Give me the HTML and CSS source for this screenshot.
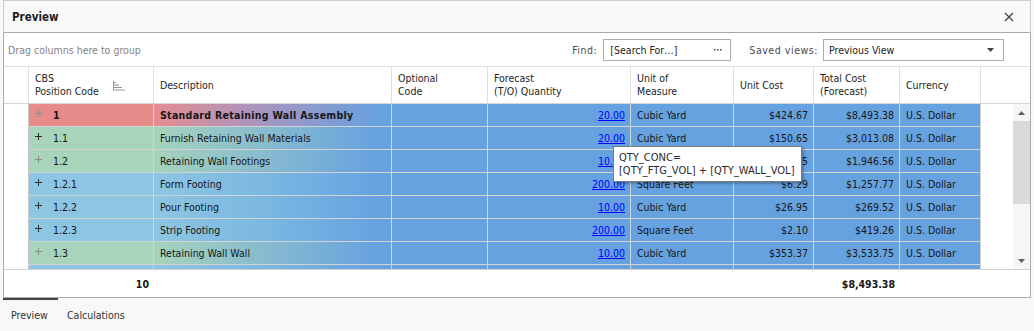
FILE: index.html
```html
<!DOCTYPE html>
<html>
<head>
<meta charset="utf-8">
<title>Preview</title>
<link rel="stylesheet" href="styles.css">
</head>
<body>
<div class="window">
  <div class="titlebar">
    <span class="title">Preview</span>
    <svg class="close" width="10" height="10" viewBox="0 0 10 10"><path d="M1 1L9 9M9 1L1 9" stroke="#444" stroke-width="1.2" fill="none"/></svg>
  </div>
  <div class="panel">
    <div class="toolbar">
      <span class="group-hint">Drag columns here to group</span>
      <span class="lbl find-lbl">Find:</span>
      <div class="find-box"><span>[Search For…]</span><svg class="dots" width="8" height="3" viewBox="0 0 8 3"><rect x="0" y="1" width="1.6" height="1.6" fill="#555"/><rect x="3" y="1" width="1.6" height="1.6" fill="#555"/><rect x="6" y="1" width="1.6" height="1.6" fill="#555"/></svg></div>
      <span class="lbl saved-lbl">Saved views:</span>
      <div class="select"><span>Previous View</span><svg class="caret" width="7" height="4" viewBox="0 0 7 4"><path d="M0 0H7L3.5 4Z" fill="#444"/></svg></div>
    </div>

    <div class="cols head">
      <div class="hc ind"></div>
      <div class="hc cbs-h"><span>CBS<br>Position Code</span><svg class="sort" width="12" height="10" viewBox="0 0 12 10"><path d="M0.5 0V9.5" stroke="#9a9a9a" stroke-width="1"/><path d="M1 1.5H3M1 4H6M1 6.5H9M1 9H12" stroke="#9a9a9a" stroke-width="1"/></svg></div>
      <div class="hc">Description</div>
      <div class="hc">Optional<br>Code</div>
      <div class="hc">Forecast<br>(T/O) Quantity</div>
      <div class="hc">Unit of<br>Measure</div>
      <div class="hc">Unit Cost</div>
      <div class="hc">Total Cost<br>(Forecast)</div>
      <div class="hc">Currency</div>
      <div class="hc rest"></div>
    </div>

    <div class="body-wrap">
      <div class="rows">
        <div class="cols row pink bold">
          <div class="c ind"></div>
          <div class="c cbs"><span class="plus light"></span>1</div>
          <div class="c desc">Standard Retaining Wall Assembly</div>
          <div class="c"></div>
          <div class="c num"><a>20.00</a></div>
          <div class="c">Cubic Yard</div>
          <div class="c num">$424.67</div>
          <div class="c num">$8,493.38</div>
          <div class="c">U.S. Dollar</div>
          <div class="c rest"></div>
        </div>
        <div class="cols row green">
          <div class="c ind"></div>
          <div class="c cbs"><span class="plus"></span>1.1</div>
          <div class="c desc">Furnish Retaining Wall Materials</div>
          <div class="c"></div>
          <div class="c num"><a>20.00</a></div>
          <div class="c">Cubic Yard</div>
          <div class="c num">$150.65</div>
          <div class="c num">$3,013.08</div>
          <div class="c">U.S. Dollar</div>
          <div class="c rest"></div>
        </div>
        <div class="cols row green">
          <div class="c ind"></div>
          <div class="c cbs"><span class="plus light"></span>1.2</div>
          <div class="c desc">Retaining Wall Footings</div>
          <div class="c"></div>
          <div class="c num"><a>10.00</a></div>
          <div class="c">Cubic Yard</div>
          <div class="c num">$194.65</div>
          <div class="c num">$1,946.56</div>
          <div class="c">U.S. Dollar</div>
          <div class="c rest"></div>
        </div>
        <div class="cols row lblue">
          <div class="c ind"></div>
          <div class="c cbs"><span class="plus"></span>1.2.1</div>
          <div class="c desc">Form Footing</div>
          <div class="c"></div>
          <div class="c num"><a>200.00</a></div>
          <div class="c">Square Feet</div>
          <div class="c num">$6.29</div>
          <div class="c num">$1,257.77</div>
          <div class="c">U.S. Dollar</div>
          <div class="c rest"></div>
        </div>
        <div class="cols row lblue">
          <div class="c ind"></div>
          <div class="c cbs"><span class="plus"></span>1.2.2</div>
          <div class="c desc">Pour Footing</div>
          <div class="c"></div>
          <div class="c num"><a>10.00</a></div>
          <div class="c">Cubic Yard</div>
          <div class="c num">$26.95</div>
          <div class="c num">$269.52</div>
          <div class="c">U.S. Dollar</div>
          <div class="c rest"></div>
        </div>
        <div class="cols row lblue">
          <div class="c ind"></div>
          <div class="c cbs"><span class="plus"></span>1.2.3</div>
          <div class="c desc">Strip Footing</div>
          <div class="c"></div>
          <div class="c num"><a>200.00</a></div>
          <div class="c">Square Feet</div>
          <div class="c num">$2.10</div>
          <div class="c num">$419.26</div>
          <div class="c">U.S. Dollar</div>
          <div class="c rest"></div>
        </div>
        <div class="cols row green">
          <div class="c ind"></div>
          <div class="c cbs"><span class="plus light"></span>1.3</div>
          <div class="c desc">Retaining Wall Wall</div>
          <div class="c"></div>
          <div class="c num"><a>10.00</a></div>
          <div class="c">Cubic Yard</div>
          <div class="c num">$353.37</div>
          <div class="c num">$3,533.75</div>
          <div class="c">U.S. Dollar</div>
          <div class="c rest"></div>
        </div>
        <div class="cols row lblue">
          <div class="c ind"></div>
          <div class="c cbs"><span class="plus"></span>1.3.1</div>
          <div class="c desc">Wall Forms</div>
          <div class="c"></div>
          <div class="c num"><a>400.00</a></div>
          <div class="c">Square Feet</div>
          <div class="c num">$6.29</div>
          <div class="c num">$2,515.54</div>
          <div class="c">U.S. Dollar</div>
          <div class="c rest"></div>
        </div>
      </div>
      <div class="scrollbar">
        <div class="sb-btn"><svg width="7" height="4" viewBox="0 0 7 4"><path d="M0 4H7L3.5 0Z" fill="#606060"/></svg></div>
        <div class="sb-track"><div class="sb-thumb"></div></div>
        <div class="sb-btn"><svg width="7" height="4" viewBox="0 0 7 4"><path d="M0 0H7L3.5 4Z" fill="#606060"/></svg></div>
      </div>
      <div class="tooltip">QTY_CONC=<br>[QTY_FTG_VOL] + [QTY_WALL_VOL]</div>
    </div>

    <div class="cols footer">
      <div class="f"></div>
      <div class="f num">10</div>
      <div class="f"></div>
      <div class="f"></div>
      <div class="f"></div>
      <div class="f"></div>
      <div class="f"></div>
      <div class="f num">$8,493.38</div>
      <div class="f"></div>
      <div class="f"></div>
    </div>
  </div>
  <div class="tabs">
    <div class="tab active">Preview</div>
    <div class="tab">Calculations</div>
  </div>
</div>
</body>
</html>
```

FILE: styles.css
```css
* { box-sizing: border-box; margin: 0; padding: 0; }
html, body { width: 1034px; height: 331px; overflow: hidden; }
body {
  background: #f8f8f8;
  font-family: "DejaVu Sans Condensed", "Liberation Sans", sans-serif;
  font-size: 10.5px;
  color: #161616;
}
.window {
  margin-left: 3px;
  width: 1028px;
  height: 331px;
  display: flex;
  flex-direction: column;
}
.titlebar {
  height: 33px;
  flex: none;
  border: 1px solid #cdcdcd;
  border-bottom-color: #a8a8a8;
  background: #f9f9f9;
  display: flex;
  align-items: center;
  padding-left: 8px;
}
.title { font-weight: bold; font-size: 11.5px; color: #1e1e1e; }
.close { margin-left: auto; margin-right: 16px; }

.panel {
  height: 265px;
  flex: none;
  background: #fff;
  border: 1px solid #adadad;
  border-top: 0;
  display: flex;
  flex-direction: column;
}
.toolbar {
  height: 33px;
  flex: none;
  display: flex;
  align-items: center;
  padding: 0 26px 0 4px;
}
.group-hint { color: #848484; }
.lbl { color: #4a4a4a; letter-spacing: 0.55px; }
.find-lbl { margin-left: auto; margin-right: 6px; }
.find-box {
  width: 128px;
  height: 22px;
  border: 1px solid #acacac;
  display: flex;
  align-items: center;
  justify-content: space-between;
  padding: 0 8px 0 6px;
  color: #222;
}
.saved-lbl { margin-left: 18px; margin-right: 5px; }
.select {
  width: 181px;
  height: 22px;
  border: 1px solid #acacac;
  display: flex;
  align-items: center;
  justify-content: space-between;
  padding: 0 9px 0 5px;
  color: #222;
}

.cols {
  display: grid;
  grid-template-columns: 25px 125px 238px 96px 143px 103px 80px 86px 81px 1fr;
}
.head {
  height: 38px;
  flex: none;
  border-top: 1px solid #dedede;
  border-bottom: 1px solid #d6d6d6;
}
.hc {
  border-right: 1px solid #dedede;
  display: flex;
  align-items: center;
  padding-left: 6px;
  line-height: 13px;
  color: #1e1e1e;
}
.hc.rest { border-right: 0; }
.cbs-h { justify-content: space-between; padding-right: 28px; }
.sort { margin-top: 2px; }

.body-wrap {
  height: 165px;
  flex: none;
  display: flex;
  position: relative;
  overflow: hidden;
}
.rows { flex: 1; overflow: hidden; }
.row { height: 23px; }
.c {
  border-right: 1px solid #d3d3d3;
  border-bottom: 1px solid #d3d3d3;
  background: #66a2e0;
  display: flex;
  align-items: center;
  padding: 0 5px 0 6px;
  white-space: nowrap;
  overflow: hidden;
}
.c.ind { background: #fff; border-bottom: 0; border-right-color: #c8c8c8; }
.c.rest { background: #fff; border: 0; }
.c.num { justify-content: flex-end; }
.c a { color: #0000ff; text-decoration: underline; }
.bold .cbs, .bold .desc { font-weight: bold; letter-spacing: 0.3px; }

.pink .cbs { background: #e88b8b; }
.pink .desc { background: linear-gradient(90deg, #e58c91 0%, #a895c0 45%, #66a2e0 95%); }
.green .cbs { background: #a7d4bb; }
.green .desc { background: linear-gradient(90deg, #a6d3bc 0%, #85b9d0 50%, #66a2e0 95%); }
.lblue .cbs { background: #8dc6e2; }
.lblue .desc { background: linear-gradient(90deg, #8dc6e2 0%, #7ab6e1 50%, #66a2e0 95%); }

.plus {
  position: relative;
  width: 7px;
  height: 7px;
  margin-right: 11px;
  margin-bottom: 4px;
  flex: none;
}
.plus::before, .plus::after {
  content: "";
  position: absolute;
  background: #2a2a2a;
}
.plus::before { left: 0; top: 3px; width: 7px; height: 1px; }
.plus::after { left: 3px; top: 0; width: 1px; height: 7px; }
.plus.light::before, .plus.light::after { background: #8c8c8c; }

.scrollbar {
  width: 17px;
  flex: none;
  background: #f6f6f6;
  display: flex;
  flex-direction: column;
}
.sb-btn {
  height: 17px;
  flex: none;
  display: flex;
  align-items: center;
  justify-content: center;
}
.sb-track { flex: 1; }
.sb-thumb { margin-top: 0; height: 83px; background: #dadada; }

.tooltip {
  position: absolute;
  left: 609px;
  top: 42px;
  width: 189px;
  height: 36px;
  background: #fff;
  border: 1px solid #7a7a7a;
  box-shadow: 2px 2px 2px rgba(0, 0, 0, 0.25);
  padding: 4px 0 0 5px;
  font-size: 11px;
  line-height: 13px;
  color: #2a2a2a;
  white-space: nowrap;
}

.footer {
  height: 28px;
  flex: none;
  border-top: 1px solid #d0d0d0;
}
.f {
  display: flex;
  align-items: center;
  padding: 0 5px 0 6px;
  font-weight: bold;
}
.f.num { justify-content: flex-end; }

.tabs {
  flex: 1;
  display: flex;
  align-items: stretch;
}
.tab {
  display: flex;
  align-items: center;
  padding: 0 9px 2px 8px;
  color: #333;
  border-top: 2px solid transparent;
}
.tab.active { border-top-color: #444; width: 55px; }
.tab + .tab { padding-left: 9px; }
```
